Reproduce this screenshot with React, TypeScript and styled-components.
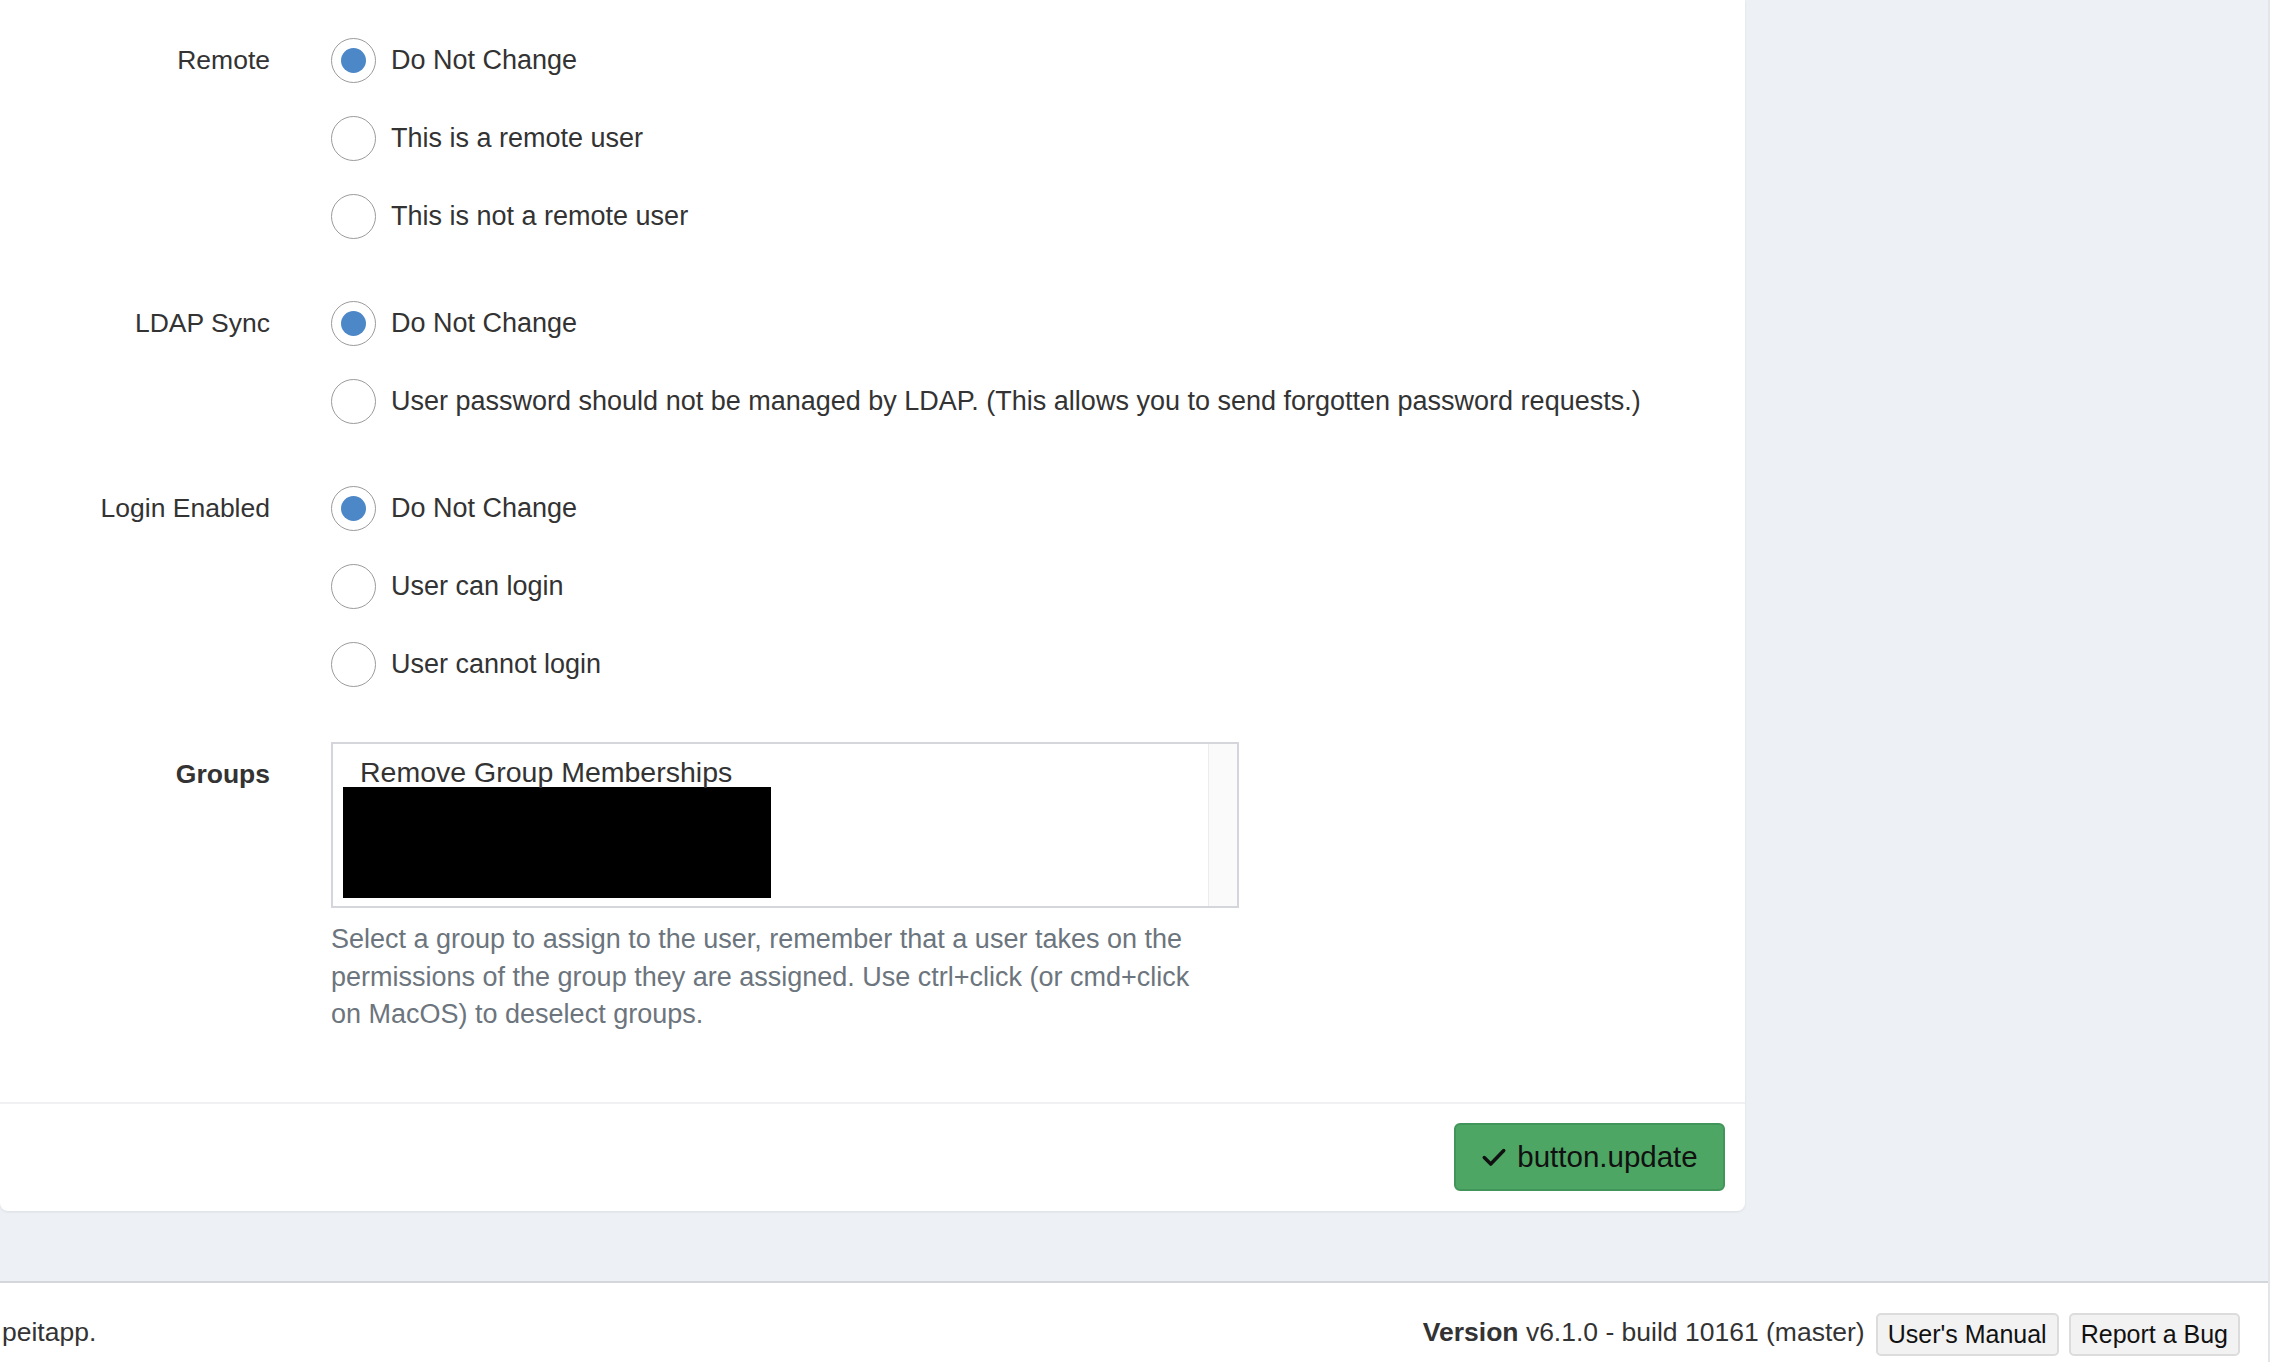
import React from 'react';
import styled, { createGlobalStyle } from 'styled-components';

const GlobalStyle = createGlobalStyle`
  html, body {
    margin: 0;
    padding: 0;
  }
  body {
    background: #edf0f5;
    font-family: "Liberation Sans", Arial, sans-serif;
    color: #333;
    overflow: hidden;
  }
`;

const Shell = styled.div`
  display: flex;
  height: 1362px;
`;

const Main = styled.div`
  flex: 1;
  display: flex;
  flex-direction: column;
  min-width: 0;
`;

// barre de défilement à droite
const ScrollTrack = styled.div`
  width: 4px;
  background: #fff;
  border-left: 2px solid #e4e5e8;
`;

const Content = styled.div`
  flex: 1;
`;

const Card = styled.div`
  width: 1745px;
  background: #fff;
  border-radius: 0 0 8px 8px;
  box-shadow: 0 1px 3px rgba(0, 0, 0, 0.08);
`;

const CardBody = styled.div`
  padding: 21px 0 68px;
`;

const FormGroup = styled.div<{ $gap?: number }>`
  display: grid;
  grid-template-columns: 270px 1fr;
  column-gap: 61px;
  margin-top: ${p => p.$gap ?? 0}px;
`;

const Label = styled.div<{ $bold?: boolean; $top?: number }>`
  text-align: right;
  font-size: 26.5px;
  line-height: ${p => (p.$top ? '30px' : '78px')};
  padding-top: ${p => p.$top ?? 0}px;
  font-weight: ${p => (p.$bold ? 700 : 400)};
  color: #333;
`;

const Options = styled.div`
  display: flex;
  flex-direction: column;
`;

const Option = styled.label`
  display: flex;
  align-items: center;
  height: 78px;
  gap: 15px;
  font-size: 27px;
  color: #333;
`;

const Radio = styled.span<{ $checked?: boolean }>`
  box-sizing: border-box;
  width: 45px;
  height: 45px;
  border-radius: 50%;
  border: 1.5px solid #9b9b9b;
  background: #fff;
  display: flex;
  align-items: center;
  justify-content: center;
  flex-shrink: 0;

  &::after {
    content: '';
    width: 25px;
    height: 25px;
    border-radius: 50%;
    background: ${p => (p.$checked ? '#4c87c8' : 'transparent')};
  }
`;

const SelectBox = styled.div`
  box-sizing: border-box;
  width: 908px;
  height: 166px;
  border: 2px solid #d5d6dc;
  display: flex;
`;

const SelectList = styled.div`
  flex: 1;
  padding: 10px 10px 0;
`;

const GroupHeading = styled.div`
  padding-left: 17px;
  font-size: 28.5px;
  line-height: 36px;
  color: #333;
`;

const Redacted = styled.div`
  width: 428px;
  height: 111px;
  margin-top: -3px;
  background: #000;
`;

const SelectScroll = styled.div`
  width: 28px;
  background: #fafafa;
  border-left: 1px solid #ececec;
`;

const Help = styled.p`
  margin: 13px 0 0;
  max-width: 880px;
  font-size: 27px;
  line-height: 37.5px;
  color: #6c757d;
`;

const CardFooter = styled.div`
  border-top: 2px solid #f1f1f3;
  padding: 19px 20px 20px;
  display: flex;
  justify-content: flex-end;
`;

const UpdateButton = styled.button`
  box-sizing: border-box;
  height: 68px;
  width: 271px;
  display: flex;
  align-items: center;
  justify-content: center;
  gap: 10px;
  background: #4ea664;
  border: 2px solid #41955a;
  border-radius: 6px;
  font-family: inherit;
  font-size: 29.5px;
  color: #111;
  cursor: pointer;
`;

const Footer = styled.footer`
  border-top: 2px solid #d3d6db;
  background: #fff;
  display: flex;
  align-items: center;
  justify-content: space-between;
  padding: 20px 28px 0 2px;
  box-sizing: border-box;
  height: 81px;
  font-size: 26.5px;
  color: #333;
`;

const FooterRight = styled.div`
  display: flex;
  align-items: center;
  gap: 10px;
`;

const Version = styled.span`
  margin-right: 1px;
  b {
    font-weight: 700;
  }
`;

const FooterButton = styled.button`
  box-sizing: border-box;
  height: 43px;
  margin-top: 4px;
  padding: 0 10px;
  background: #f2f2f2;
  border: 2px solid #dcdcdc;
  border-radius: 5px;
  font-family: inherit;
  font-size: 25px;
  color: #111;
`;

const Check = () => (
  <svg width="26" height="26" viewBox="0 0 24 24" fill="none" stroke="#111" strokeWidth="3.2" strokeLinecap="round" strokeLinejoin="round">
    <path d="M3 12.5l6 6L21 6" />
  </svg>
);

type RadioGroupProps = { label: string; options: string[]; gap?: number };

const RadioGroup: React.FC<RadioGroupProps> = ({ label, options, gap }) => (
  <FormGroup $gap={gap}>
    <Label>{label}</Label>
    <Options>
      {options.map((o, i) => (
        <Option key={o}>
          <Radio $checked={i === 0} />
          {o}
        </Option>
      ))}
    </Options>
  </FormGroup>
);

export default function App() {
  return (
    <>
      <GlobalStyle />
      <Shell>
        <Main>
          <Content>
            <Card>
              <CardBody>
                <RadioGroup label="Remote" options={['Do Not Change', 'This is a remote user', 'This is not a remote user']} />
                <RadioGroup
                  gap={29}
                  label="LDAP Sync"
                  options={['Do Not Change', 'User password should not be managed by LDAP. (This allows you to send forgotten password requests.)']}
                />
                <RadioGroup gap={29} label="Login Enabled" options={['Do Not Change', 'User can login', 'User cannot login']} />
                <FormGroup $gap={39}>
                  <Label $bold $top={17}>Groups</Label>
                  <div>
                    <SelectBox>
                      <SelectList>
                        <GroupHeading>Remove Group Memberships</GroupHeading>
                        <Redacted />
                      </SelectList>
                      <SelectScroll />
                    </SelectBox>
                    <Help>
                      Select a group to assign to the user, remember that a user takes on the permissions of the group they are
                      assigned. Use ctrl+click (or cmd+click on MacOS) to deselect groups.
                    </Help>
                  </div>
                </FormGroup>
              </CardBody>
              <CardFooter>
                <UpdateButton>
                  <Check />
                  button.update
                </UpdateButton>
              </CardFooter>
            </Card>
          </Content>
          <Footer>
            <span>peitapp.</span>
            <FooterRight>
              <Version>
                <b>Version</b> v6.1.0 - build 10161 (master)
              </Version>
              <FooterButton>User's Manual</FooterButton>
              <FooterButton>Report a Bug</FooterButton>
            </FooterRight>
          </Footer>
        </Main>
        <ScrollTrack />
      </Shell>
    </>
  );
}
